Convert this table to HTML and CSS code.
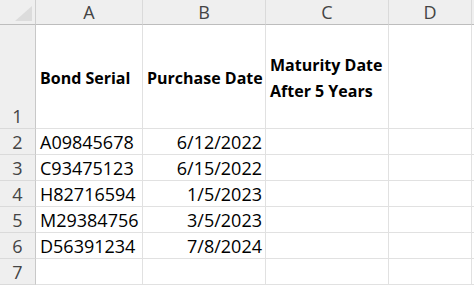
FILE: index.html
```html
<!DOCTYPE html>
<html>
<head>
<meta charset="utf-8">
<link rel="stylesheet" href="styles.css">
</head>
<body>
<div class="sheet">
  <div class="corner"><svg class="tri" width="18" height="16" viewBox="0 0 18 16"><polygon points="17,0 17,15 0,15" fill="#dcdcdc"/></svg></div>
  <div class="colh">A</div>
  <div class="colh">B</div>
  <div class="colh">C</div>
  <div class="colh">D</div>
  <div class="colh last"></div>

  <div class="rowh">1</div>
  <div class="cell hd">Bond Serial</div>
  <div class="cell hd">Purchase Date</div>
  <div class="cell hd two">Maturity Date<br>After 5 Years</div>
  <div class="cell"></div>
  <div class="cell last"></div>

  <div class="rowh">2</div>
  <div class="cell">A09845678</div>
  <div class="cell num">6/12/2022</div>
  <div class="cell"></div>
  <div class="cell"></div>
  <div class="cell last"></div>

  <div class="rowh">3</div>
  <div class="cell">C93475123</div>
  <div class="cell num">6/15/2022</div>
  <div class="cell"></div>
  <div class="cell"></div>
  <div class="cell last"></div>

  <div class="rowh">4</div>
  <div class="cell">H82716594</div>
  <div class="cell num">1/5/2023</div>
  <div class="cell"></div>
  <div class="cell"></div>
  <div class="cell last"></div>

  <div class="rowh">5</div>
  <div class="cell">M29384756</div>
  <div class="cell num">3/5/2023</div>
  <div class="cell"></div>
  <div class="cell"></div>
  <div class="cell last"></div>

  <div class="rowh">6</div>
  <div class="cell">D56391234</div>
  <div class="cell num">7/8/2024</div>
  <div class="cell"></div>
  <div class="cell"></div>
  <div class="cell last"></div>

  <div class="rowh">7</div>
  <div class="cell"></div>
  <div class="cell"></div>
  <div class="cell"></div>
  <div class="cell"></div>
  <div class="cell last"></div>
</div>
</body>
</html>
```

FILE: styles.css
```css
html, body {
  margin: 0;
  padding: 0;
  background: #ffffff;
  overflow: hidden;
}
.sheet {
  display: grid;
  grid-template-columns: 36px 107px 123px 123px 83px 2px;
  grid-template-rows: 25px 104px 26px 26px 26px 26px 26px 26px 26px;
  font-family: "Open Sans", "Liberation Sans", sans-serif;
  font-size: 18px;
  color: #000;
  width: 474px;
  height: 288px;
}
.corner {
  background: #efefef;
  border-right: 1px solid #cfcfcf;
  border-bottom: 1px solid #bdbdbd;
  display: flex;
  align-items: flex-end;
  justify-content: flex-end;
  padding: 0 2px 2px 0;
}
.tri {
  display: block;
}
.colh {
  background: #efefef;
  border-right: 1px solid #dadada;
  border-bottom: 1px solid #bdbdbd;
  color: #444;
  display: flex;
  align-items: center;
  justify-content: center;
  font-size: 18px;
  line-height: 1;
}
.rowh {
  background: #efefef;
  border-right: 1px solid #c8c8c8;
  border-bottom: 1px solid #dadada;
  color: #444;
  display: flex;
  align-items: flex-end;
  justify-content: center;
  padding-bottom: 3px;
  line-height: 1;
}
.cell {
  border-right: 1px solid #e1e1e1;
  border-bottom: 1px solid #e1e1e1;
  display: flex;
  align-items: flex-end;
  padding: 0 3px 3px 4px;
  line-height: 1;
  white-space: nowrap;
  overflow: hidden;
}
.cell.last, .colh.last {
  border-right: none;
}
.cell.num {
  justify-content: flex-end;
}
.cell.hd {
  font-weight: 700;
  font-size: 16px;
  align-items: center;
  padding-bottom: 0;
  padding-top: 2px;
}
.cell.two {
  line-height: 26px;
}
```
